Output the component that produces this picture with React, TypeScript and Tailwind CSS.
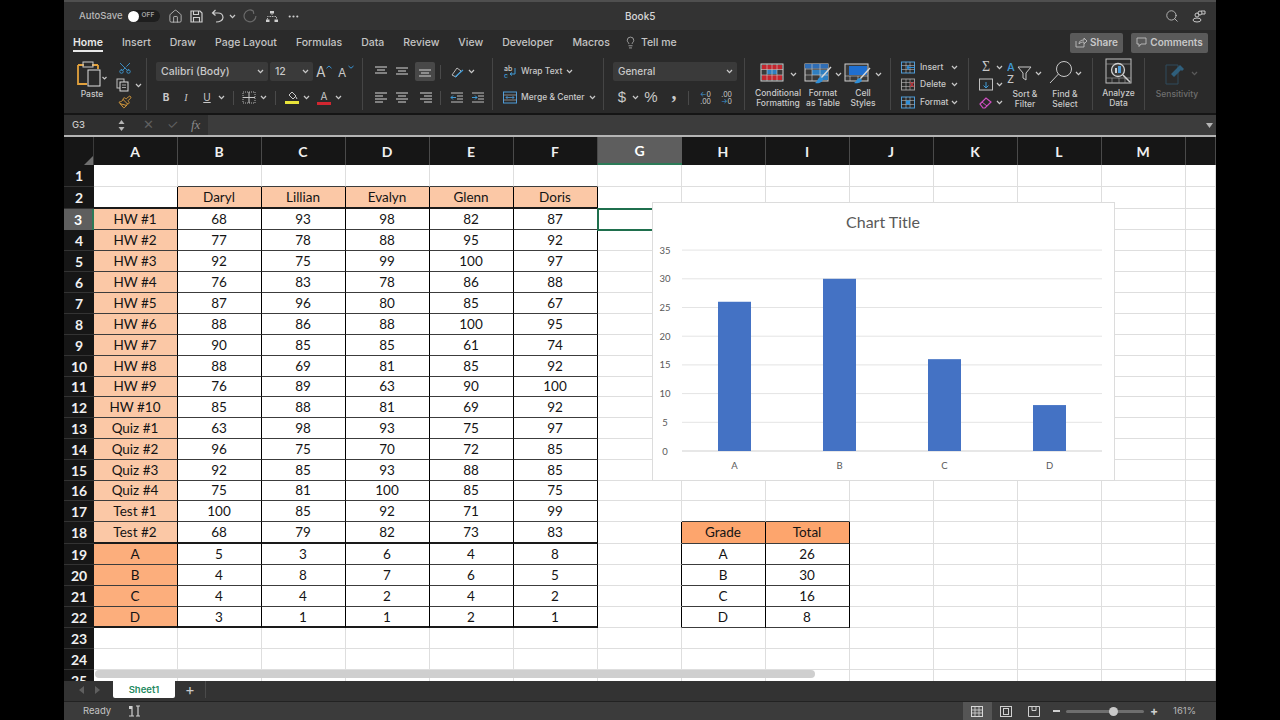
import React from "react";
import { Search, Lightbulb, Scissors, Paintbrush, House, Ellipsis } from "lucide-react";

const Caret = ({ c = "#c8c8c8" }: { c?: string }) => (
  <svg width="7" height="5" viewBox="0 0 7 5" className="shrink-0"><path d="M1 1l2.5 2.600L6 1" fill="none" stroke={c} strokeWidth="1.300" /></svg>
);
const Div = () => <div className="w-px h-[14px] bg-[#4a4a4a] shrink-0" />;

const Lines = ({ rows, color = "#c9c9c9", w = 14 }: { rows: number[][]; color?: string; w?: number }) => (
  <svg width={w} height="13" viewBox={`0 0 ${w} 13`}>
    {rows.map((r, i) => <line key={i} x1={r[0]} x2={r[1]} y1={r[2]} y2={r[2]} stroke={color} strokeWidth="1.100" />)}
  </svg>
);

const TableIcon = ({ kind }: { kind: "cond" | "fmt" | "cell" }) => (
  <svg width="30" height="22" viewBox="0 0 30 22">
    {kind === "cond" && <g>
      <rect x="1" y="1" width="22" height="17" fill="#3a3a3a" stroke="#cfcfcf" />
      <rect x="2" y="2" width="20" height="4.500" fill="#c4262e" />
      <rect x="7" y="7" width="10" height="4" fill="#2f7fc1" />
      <rect x="2" y="12" width="20" height="5" fill="#c4262e" />
      <path d="M7 1v17M12 1v17M17 1v17M1 6.500h22M1 12h22" stroke="#cfcfcf" strokeWidth=".6" fill="none" />
    </g>}
    {kind === "fmt" && <g>
      <rect x="1" y="1" width="23" height="17" fill="#3a3a3a" stroke="#cfcfcf" />
      <rect x="1" y="1" width="23" height="4.500" fill="#2f6db5" />
      <rect x="8" y="7" width="8" height="5" fill="#2f7fc1" />
      <rect x="16" y="7" width="8" height="10" fill="#2f7fc1" />
      <path d="M8 1v17M16 1v17M1 6h23M1 12h23" stroke="#cfcfcf" strokeWidth=".6" fill="none" />
      <path d="M27 4L17 15" stroke="#d8d8d8" strokeWidth="1.400" />
      <path d="M17 14c-3 0-3 4-6 6 4 1 8-1 8-4z" fill="#2f8fd8" />
    </g>}
    {kind === "cell" && <g>
      <rect x="1" y="1" width="23" height="17" fill="#3a3a3a" stroke="#cfcfcf" />
      <rect x="5" y="3" width="18" height="9" fill="#1f6fd0" />
      <path d="M1 13h23M6 13v5M14 13v5" stroke="#cfcfcf" strokeWidth=".6" fill="none" />
      <path d="M26 5L16 16" stroke="#d8d8d8" strokeWidth="1.400" />
      <path d="M16 15c-3 0-3 3-6 5 4 1 8-1 8-3z" fill="#2f8fd8" />
    </g>}
  </svg>
);

const SmallTable = ({ kind }: { kind: "ins" | "del" | "fmt" }) => (
  <svg width="14" height="13" viewBox="0 0 14 13">
    <rect x=".5" y="1" width="13" height="11" fill="none" stroke={kind === "del" ? "#9a9a9a" : "#4d9bd8"} />
    <path d="M.5 4.500h13M.5 8.500h13M5 1v11M9 1v11" stroke="#b9b9b9" strokeWidth=".6" />
    {kind === "ins" && <path d="M6 6.500h7M6 6.500l2-2M6 6.500l2 2" stroke="#2f8fd8" strokeWidth="1.200" fill="none" />}
    {kind === "del" && <path d="M9 4l4 5M13 4l-4 5" stroke="#c8323c" strokeWidth="1.200" />}
    {kind === "fmt" && <rect x="5" y="4.500" width="4" height="4" fill="#2f8fd8" />}
  </svg>
);

const FontA = ({ up }: { up?: boolean }) => (
  <div className="relative w-[16px] h-[16px]">
    <span className={up ? "absolute left-0 top-0 text-[14px] leading-[16px] text-[#c8c8c8]" : "absolute left-0 top-[1px] text-[12px] leading-[15px] text-[#c8c8c8]"}>A</span>
    <svg width="6" height="4" viewBox="0 0 6 4" className="absolute right-0 top-[1px]">
      <path d={up ? "M.5 3.200L3 1l2.500 2.200" : "M.5 1L3 3.200 5.500 1"} fill="none" stroke="#3a96d8" strokeWidth="1" />
    </svg>
  </div>
);

const titleIcons = (
  <div className="flex items-center h-full">
    <House size={15} color="#c9c9c9" strokeWidth={1.3} className="ml-[8px]" />
    <svg width="13" height="13" viewBox="0 0 13 13" className="ml-[7px]"><path d="M1 1h9l2 2v9H1z" fill="none" stroke="#cfcfcf" strokeWidth="1.200" /><path d="M3.500 1v3.500h5V1M3.500 12V7.500h6V12" fill="none" stroke="#cfcfcf" strokeWidth="1.100" /></svg>
    <svg width="14" height="14" viewBox="0 0 14 14" className="ml-[8px]"><path d="M4.500 1L1.500 4l3 2.500M1.500 4h5.500c3 0 5 2 5 4.500S9 13 5 13" fill="none" stroke="#cfcfcf" strokeWidth="1.200" /></svg>
    <div className="ml-[4px]"><Caret /></div>
    <svg width="14" height="14" viewBox="0 0 13 13" className="ml-[7px]"><path d="M9.500 1.800A5.500 5.500 0 1 0 12 6.500M9.500 1.800l.5 2.700M9.500 1.800L7 1" fill="none" stroke="#6a6a6a" strokeWidth="1.100" /></svg>
    <svg width="14" height="13" viewBox="0 0 14 13" className="ml-[8px]"><path d="M5 1h4v2.500H5zM1 9.500h3.500V12H1zM9.500 9.500H13V12H9.500z" fill="#cfcfcf" /><path d="M7 3.500v3M2.500 9.500V6.500h9v3" fill="none" stroke="#cfcfcf" strokeWidth=".8" strokeDasharray="1.500 1" /></svg>
    <Ellipsis size={13} color="#d0d0d0" className="ml-[8px]" />
  </div>
);

const tabs = ["Insert", "Draw", "Page Layout", "Formulas", "Data", "Review", "View", "Developer", "Macros"];

const Ribbon = () => (
  <div className="h-[58px] bg-[#2a2a2a] flex font-[Inter,sans-serif] text-[#c9c9c9]">
    {/* Clipboard */}
    <div className="w-[83px] my-[3px] border-r border-[#454545] flex shrink-0">
      <div className="w-[40px] ml-[8px] flex flex-col items-center">
        <svg width="32" height="27" viewBox="0 0 32 27" className="mt-[2px]">
          <path d="M2 5h6M16 5h6M22 5v4M2 5v19h9" fill="none" stroke="#e2a13c" strokeWidth="1.800" />
          <rect x="7" y="2" width="10" height="5" fill="none" stroke="#c9c9c9" />
          <rect x="12" y="10" width="12" height="16" fill="#2a2a2a" stroke="#e0e0e0" />
          <path d="M26.500 17l2 2 2-2" fill="none" stroke="#c8c8c8" strokeWidth="1.200" />
        </svg>
        <span className="text-[8.5px] font-medium leading-[10px] mt-[2px]">Paste</span>
      </div>
      <div className="ml-[4px] flex flex-col items-start gap-[3px] pt-[3px]">
        <Scissors size={14} color="#3f9ad6" strokeWidth={1.5} className="-rotate-90 ml-[2px]" />
        <div className="flex items-center gap-[5px]">
          <svg width="14" height="14" viewBox="0 0 14 14"><rect x="1" y="1" width="7" height="9" fill="none" stroke="#c0c0c0" /><rect x="4" y="4" width="8" height="9" fill="#2a2a2a" stroke="#d8d8d8" /><path d="M6 7h4M6 9.500h4" stroke="#c0c0c0" strokeWidth=".8" /></svg>
          <Caret />
        </div>
        <Paintbrush size={14} color="#e2a13c" strokeWidth={1.6} className="ml-[2px]" />
      </div>
    </div>
    {/* Font */}
    <div className="w-[216px] my-[3px] border-r border-[#454545] pl-[9px] pt-[4px] shrink-0">
      <div className="flex items-center h-[19px]">
        <div className="w-[112px] h-[19px] bg-[#3a3a3a] rounded-[2px] flex items-center justify-between pl-[5px] pr-[4px] text-[10.500px] font-medium"><span>Calibri (Body)</span><Caret /></div>
        <div className="w-[43px] h-[19px] ml-[2px] bg-[#3a3a3a] rounded-[2px] flex items-center justify-between pl-[5px] pr-[4px] text-[10.500px] font-medium"><span>12</span><Caret /></div>
        <div className="ml-[3px]"><FontA up /></div>
        <div className="ml-[6px]"><FontA /></div>
      </div>
      <div className="flex items-center h-[19px] mt-[7px] text-[10px]">
        <span className="w-[20px] text-center font-bold">B</span>
        <span className="w-[20px] text-center italic font-[Liberation_Serif,serif]">I</span>
        <span className="w-[22px] text-center underline">U</span>
        <Caret />
        <div className="ml-[8px]"><Div /></div>
        <svg width="14" height="13" viewBox="0 0 14 13" className="ml-[8px]"><rect x="1" y="1" width="12" height="11" fill="none" stroke="#b0b0b0" strokeDasharray="1 1" /><path d="M7 1v11M1 6.500h12" stroke="#c8c8c8" /></svg>
        <div className="ml-[4px]"><Caret /></div>
        <div className="ml-[8px]"><Div /></div>
        <div className="ml-[9px] w-[14px] flex flex-col items-center">
          <svg width="11" height="9" viewBox="0 0 11 9"><path d="M5 1l4 4-3 3-4-4zM9 6l1 2" fill="none" stroke="#c8c8c8" /></svg>
          <div className="w-[14px] h-[3px] bg-[#e8e33a] mt-[1px]" />
        </div>
        <div className="ml-[4px]"><Caret /></div>
        <div className="ml-[7px] w-[14px] flex flex-col items-center">
          <span className="text-[10px] leading-[10px]">A</span>
          <div className="w-[14px] h-[3px] bg-[#d22630] mt-[1px]" />
        </div>
        <div className="ml-[4px]"><Caret /></div>
      </div>
    </div>
    {/* Alignment */}
    <div className="w-[130px] my-[3px] border-r border-[#454545] pl-[10px] pt-[4px] shrink-0">
      <div className="flex items-center h-[19px]">
        <div className="w-[21px] flex justify-start pl-[1px]"><Lines rows={[[1, 13, 2], [3, 11, 5], [1, 13, 8]]} /></div>
        <div className="w-[21px] flex justify-start pl-[1px]"><Lines rows={[[1, 13, 3], [3, 11, 6], [1, 13, 9]]} /></div>
        <div className="w-[20px] h-[19px] bg-[#484848] rounded-[2px] flex items-center justify-center"><Lines rows={[[1, 13, 5], [3, 11, 8], [1, 13, 11]]} /></div>
        <div className="ml-[5px]"><Div /></div>
        <svg width="14" height="14" viewBox="0 0 14 14" className="ml-[9px]"><path d="M2 10l5-7 4 3-5 6z" fill="none" stroke="#b8b8b8" /><path d="M5 12l8-7" stroke="#3f9ad6" strokeWidth="1.200" /></svg>
        <div className="ml-[4px]"><Caret /></div>
      </div>
      <div className="flex items-center h-[19px] mt-[7px]">
        <div className="w-[21px] pl-[1px]"><Lines rows={[[1, 13, 2], [1, 9, 5], [1, 13, 8], [1, 9, 11]]} /></div>
        <div className="w-[21px] pl-[1px]"><Lines rows={[[1, 13, 2], [3, 11, 5], [1, 13, 8], [3, 11, 11]]} /></div>
        <div className="w-[20px] pl-[4px]"><Lines rows={[[1, 13, 2], [5, 13, 5], [1, 13, 8], [5, 13, 11]]} /></div>
        <div className="ml-[5px]"><Div /></div>
        <svg width="14" height="13" viewBox="0 0 14 13" className="ml-[9px]"><path d="M1 2h12M7 5h6M7 8h6M1 11h12" stroke="#c0c0c0" /><path d="M1 6.500h5M1 6.500l2-2M1 6.500l2 2" stroke="#3f9ad6" fill="none" /></svg>
        <svg width="14" height="13" viewBox="0 0 14 13" className="ml-[7px]"><path d="M1 2h12M7 5h6M7 8h6M1 11h12" stroke="#c0c0c0" /><path d="M1 6.500h5M6 6.500l-2-2M6 6.500l-2 2" stroke="#3f9ad6" fill="none" /></svg>
      </div>
    </div>
    {/* Wrap */}
    <div className="w-[111px] my-[3px] border-r border-[#454545] pl-[10px] pt-[4px] text-[8.500px] font-medium shrink-0">
      <div className="flex items-center h-[19px]">
        <svg width="14" height="14" viewBox="0 0 14 14"><text x="1" y="6" fontSize="7" fill="#c8c8c8">ab</text><text x="1" y="13" fontSize="7" fill="#3f9ad6">c</text><path d="M12 3v6H7M7 9l2-1.500M7 9l2 1.500" fill="none" stroke="#3f9ad6" /></svg>
        <span className="ml-[4px]">Wrap Text</span>
        <div className="ml-[4px]"><Caret /></div>
      </div>
      <div className="flex items-center h-[19px] mt-[7px]">
        <svg width="14" height="13" viewBox="0 0 14 13"><rect x=".5" y="1" width="13" height="11" fill="none" stroke="#4d9bd8" /><path d="M.5 4h13M.5 9h13" stroke="#b0b0b0" strokeWidth=".7" /><path d="M3 6.500h8M3 6.500l1.500-1.500M3 6.500l1.500 1.500M11 6.500L9.500 5M11 6.500L9.500 8" stroke="#4d9bd8" fill="none" strokeWidth=".8" /></svg>
        <span className="ml-[4px]">Merge &amp; Center</span>
        <div className="ml-[4px]"><Caret /></div>
      </div>
    </div>
    {/* Number */}
    <div className="w-[141px] my-[3px] border-r border-[#454545] pl-[9px] pt-[4px] shrink-0">
      <div className="w-[124px] h-[19px] bg-[#3a3a3a] rounded-[2px] flex items-center justify-between pl-[5px] pr-[4px] text-[10px] font-medium"><span>General</span><Caret /></div>
      <div className="flex items-center h-[19px] mt-[7px]">
        <span className="w-[18px] text-center text-[15px] font-[Liberation_Sans,sans-serif]">$</span>
        <div className="ml-[1px]"><Caret /></div>
        <span className="ml-[5px] w-[14px] text-center text-[15px] font-[Liberation_Sans,sans-serif]">%</span>
        <span className="ml-[11px] w-[10px] h-[19px] text-center text-[20px] leading-[9px] font-bold font-[Liberation_Serif,serif]">,</span>
        <div className="ml-[9px]"><Div /></div>
        <div className="ml-[8px] w-[14px] text-[7px] leading-[7px] text-right"><div><span className="text-[#3f9ad6]">←</span>0</div><div>.00</div></div>
        <div className="ml-[7px] w-[14px] text-[7px] leading-[7px] text-right"><div>.00</div><div><span className="text-[#3f9ad6]">→</span>0</div></div>
      </div>
    </div>
    {/* Styles */}
    <div className="w-[146px] my-[3px] border-r border-[#454545] pl-[9px] pt-[4px] text-[8.500px] font-medium leading-[9.500px] text-center shrink-0 flex">
      <div className="w-[48px] flex flex-col items-center">
        <div className="h-[24px] flex items-center gap-[3px]"><TableIcon kind="cond" /><div className="-ml-[3px]"><Caret /></div></div>
        <span className="mt-[3px]">Conditional</span><span>Formatting</span>
      </div>
      <div className="w-[38px] ml-[2px] flex flex-col items-center">
        <div className="h-[24px] flex items-center gap-[1px]"><TableIcon kind="fmt" /><Caret /></div>
        <span className="mt-[3px]">Format</span><span>as Table</span>
      </div>
      <div className="w-[40px] ml-[1px] flex flex-col items-center">
        <div className="h-[24px] flex items-center gap-[1px]"><TableIcon kind="cell" /><Caret /></div>
        <span className="mt-[3px]">Cell</span><span>Styles</span>
      </div>
    </div>
    {/* Cells */}
    <div className="w-[78px] my-[3px] border-r border-[#454545] pl-[10px] pt-[2px] text-[8.500px] font-medium flex flex-col gap-[3.500px] shrink-0">
      {([["ins", "Insert"], ["del", "Delete"], ["fmt", "Format"]] as const).map(([k, t]) => (
        <div key={t} className="flex items-center h-[14px]">
          <SmallTable kind={k} />
          <span className="ml-[5px] w-[31px]">{t}</span>
          <Caret />
        </div>
      ))}
    </div>
    {/* Editing */}
    <div className="w-[124px] my-[3px] border-r border-[#454545] pl-[10px] pt-[2px] text-[8.500px] font-medium leading-[9.500px] text-center flex shrink-0">
      <div className="w-[27px] flex flex-col gap-[3.500px]">
        <div className="flex items-center h-[14px] gap-[3px]"><span className="w-[14px] text-[14px] leading-[14px] font-[Liberation_Serif,serif]">Σ</span><Caret /></div>
        <div className="flex items-center h-[14px] gap-[3px]"><svg width="14" height="13" viewBox="0 0 14 13"><rect x=".5" y="1" width="13" height="11" fill="none" stroke="#c0c0c0" /><path d="M7 4v6M4.500 7.500L7 10l2.500-2.500" stroke="#3f9ad6" fill="none" /></svg><Caret /></div>
        <div className="flex items-center h-[14px] gap-[3px]"><svg width="14" height="13" viewBox="0 0 14 13"><path d="M1 8l6-6 5 4-6 6H4z" fill="none" stroke="#d14fc4" strokeWidth="1.200" /><path d="M3 6l5 4" stroke="#d14fc4" /></svg><Caret /></div>
      </div>
      <div className="w-[40px] flex flex-col items-center">
        <div className="h-[26px] flex items-center gap-[2px] -ml-[3px]">
          <svg width="26" height="24" viewBox="0 0 26 24"><text x="0" y="10" fontSize="11" fill="#3f9ad6">A</text><text x="0" y="22" fontSize="11" fill="#c8c8c8">Z</text><path d="M11 6h13l-5 6v7l-3-2v-5z" fill="none" stroke="#c8c8c8" /></svg>
          <Caret />
        </div>
        <span className="mt-[4px] -ml-[2px]">Sort &amp;</span><span className="-ml-[2px]">Filter</span>
      </div>
      <div className="w-[40px] flex flex-col items-center">
        <div className="h-[26px] flex items-center gap-[2px] -ml-[2px]">
          <svg width="24" height="26" viewBox="0 0 24 26"><circle cx="15" cy="9" r="7.500" fill="none" stroke="#c8c8c8" /><path d="M9.500 14L1 23" stroke="#c8c8c8" /></svg>
          <Caret />
        </div>
        <span className="mt-[4px] -ml-[2px]">Find &amp;</span><span className="-ml-[2px]">Select</span>
      </div>
    </div>
    {/* Analyze */}
    <div className="w-[52px] my-[3px] border-r border-[#454545] text-[8.500px] font-medium leading-[9.500px] flex flex-col items-center shrink-0">
      <svg width="28" height="27" viewBox="0 0 28 27">
        <rect x="1" y="1" width="25" height="24" fill="none" stroke="#c0c0c0" />
        <path d="M1 6h25M1 20h25M7 20v5M14 20v5M20 20v5" stroke="#9a9a9a" strokeWidth=".7" />
        <circle cx="13" cy="12" r="6.500" fill="#3a3a3a" stroke="#d0d0d0" strokeWidth="1.300" />
        <rect x="10" y="10" width="2" height="5" fill="#d0d0d0" /><rect x="13" y="8" width="3" height="7" fill="#4d9bd8" />
        <path d="M18 17l7 7" stroke="#d0d0d0" strokeWidth="1.500" />
      </svg>
      <span className="mt-[4px]">Analyze</span><span>Data</span>
    </div>
    {/* Sensitivity */}
    <div className="flex-1 my-[3px] text-[8.500px] font-medium leading-[10px] text-[#6f6f6f] flex flex-col items-center">
      <div className="h-[27px] flex items-center gap-[4px] mt-[2px]">
        <svg width="24" height="24" viewBox="0 0 24 24"><path d="M3 3h12v19H3z" fill="none" stroke="#2f4a5c" /><path d="M8 12l7-7 3 3-7 7z M17 3l4 4-2 2-4-4z" fill="#2f5f7c" /></svg>
        <Caret c="#5a5a5a" />
      </div>
      <span className="mt-[2px] pr-[7px]">Sensitivity</span>
    </div>
  </div>
);

const colLetters = ["A", "B", "C", "D", "E", "F", "G", "H", "I", "J", "K", "L", "M", ""];

const data: string[][] = [
  ["", "Daryl", "Lillian", "Evalyn", "Glenn", "Doris"],
  ["HW #1", "68", "93", "98", "82", "87"],
  ["HW #2", "77", "78", "88", "95", "92"],
  ["HW #3", "92", "75", "99", "100", "97"],
  ["HW #4", "76", "83", "78", "86", "88"],
  ["HW #5", "87", "96", "80", "85", "67"],
  ["HW #6", "88", "86", "88", "100", "95"],
  ["HW #7", "90", "85", "85", "61", "74"],
  ["HW #8", "88", "69", "81", "85", "92"],
  ["HW #9", "76", "89", "63", "90", "100"],
  ["HW #10", "85", "88", "81", "69", "92"],
  ["Quiz #1", "63", "98", "93", "75", "97"],
  ["Quiz #2", "96", "75", "70", "72", "85"],
  ["Quiz #3", "92", "85", "93", "88", "85"],
  ["Quiz #4", "75", "81", "100", "85", "75"],
  ["Test #1", "100", "85", "92", "71", "99"],
  ["Test #2", "68", "79", "82", "73", "83"],
  ["A", "5", "3", "6", "4", "8"],
  ["B", "4", "8", "7", "6", "5"],
  ["C", "4", "4", "2", "4", "2"],
  ["D", "3", "1", "1", "2", "1"],
];
const grade: string[][] = [["Grade", "Total"], ["A", "26"], ["B", "30"], ["C", "16"], ["D", "8"]];

function cellText(r: number, c: number) {
  if (r >= 2 && r <= 22 && c <= 5) return data[r - 2][c];
  if (r >= 18 && r <= 22 && (c === 7 || c === 8)) return grade[r - 18][c - 7];
  return "";
}
function cellClass(r: number, c: number) {
  const inMain = r >= 2 && r <= 22 && c <= 5;
  const inGrade = r >= 18 && r <= 22 && (c === 7 || c === 8);
  let cls = "flex items-center justify-center border-r border-b overflow-hidden pr-[1px] ";
  if (r >= 19) cls += "pt-[1px] ";
  const darkRight = inMain || (r >= 18 && r <= 22 && (c === 6 || c === 7 || c === 8));
  cls += darkRight ? "border-r-black " : "border-r-[#dedede] ";
  const darkBottom = inMain || inGrade || (r === 1 && c >= 1 && c <= 5) || (r === 17 && (c === 7 || c === 8));
  if (darkBottom) {
    if (inMain && (r === 2 || r === 18 || r === 22)) cls += "border-b-2 border-b-[#1a1a1a] ";
    else cls += "border-b-[#3c3c3c] ";
  } else cls += "border-b-[#dedede] ";
  if (r === 2 && c >= 1 && c <= 5) cls += "bg-[#fbc8a6] ";
  else if (c === 0 && r >= 3 && r <= 18) cls += "bg-[#fbc8a6] ";
  else if (c === 0 && r >= 19 && r <= 22) cls += "bg-[#fcae7c] ";
  else if (r === 18 && (c === 7 || c === 8)) cls += "bg-[#fda56d] ";
  else cls += "bg-white ";
  return cls;
}

const rowNums = Array.from({ length: 25 }, (_, i) => i + 1);
const yTicks = [35, 30, 25, 20, 15, 10, 5, 0];
const bars = [{ l: "A", x: 66, v: 26 }, { l: "B", x: 171, v: 30 }, { l: "C", x: 276, v: 16 }, { l: "D", x: 381, v: 8 }];

const Sheet = () => (
  <div className="relative h-[544px] bg-white overflow-hidden font-[Lato,sans-serif] text-[13.500px] text-[#141414] shrink-0">
    <div className="grid grid-cols-[30px_repeat(13,84px)_30px] grid-rows-[28px_22px_22px_21px_21px_21px_21px_21px_21px_21px_21px_20px_21px_21px_21px_21px_20px_21px_22px_21px_21px_21px_21px_21px_21px_21px]">
      <div className="bg-[#161616] border-r border-[#3a3a3a] relative">
        <svg width="9" height="9" viewBox="0 0 9 9" className="absolute right-0 bottom-0"><path d="M9 0v9H0z" fill="#6f6f6f" /></svg>
      </div>
      {colLetters.map((l, i) => (
        <div key={i} className={i === 6 ? "bg-[#5e5e5e] border-b-2 border-[#2c7a57] flex items-center justify-center font-bold text-white text-[14px] pr-[1px]" : "bg-[#161616] border-r border-[#4a4a4a] flex items-center justify-center font-bold text-[#f0f0f0] text-[14px] pr-[1px]"}>{l}</div>
      ))}
      {rowNums.map((r) => (
        <React.Fragment key={r}>
          <div className={r === 3 ? "bg-[#5e5e5e] border-r-2 border-[#2c7a57] flex items-center justify-center font-bold text-white text-[14px]" : "bg-[#161616] border-b border-[#333] flex items-center justify-center font-bold text-[#f0f0f0] text-[14px]"}>{r}</div>
          {colLetters.map((_, c) => (
            <div key={c} className={cellClass(r, c)}>{cellText(r, c)}</div>
          ))}
        </React.Fragment>
      ))}
    </div>
    {/* selected cell */}
    <div className="absolute left-[533px] top-[71px] w-[85px] h-[23px] border-2 border-[#1f6f4d]" />
    {/* chart */}
    <div className="absolute left-[588px] top-[65px] w-[463px] h-[279px] bg-white border border-[#dcdcdc]">
      <svg width="461" height="277" viewBox="1 0 461 277" className="font-[Lato,sans-serif]">
        <text x="231" y="25" textAnchor="middle" fontSize="16" fill="#595959">Chart Title</text>
        {yTicks.map((t) => {
          const y = 248 - t * 5.74;
          return (
            <g key={t}>
              <text x="13" y={y + 3.5} textAnchor="middle" fontSize="9.500" fill="#595959">{t}</text>
              <line x1="30" x2="450" y1={y} y2={y} stroke={t === 0 ? "#cfcfcf" : "#e4e4e4"} />
            </g>
          );
        })}
        {bars.map((b) => (
          <g key={b.l}>
            <rect x={b.x} y={248 - b.v * 5.74} width="33" height={b.v * 5.74} fill="#4472c4" />
            <text x={b.x + 16.5} y="266" textAnchor="middle" fontSize="9.500" fill="#595959">{b.l}</text>
          </g>
        ))}
      </svg>
    </div>
    {/* scrollbar */}
    <div className="absolute left-[31px] top-[533px] w-[720px] h-[8px] rounded-full bg-[#cfcfcf]" />
  </div>
);

export default function App() {
  return (
    <div className="w-[1280px] h-[720px] bg-black flex justify-center overflow-hidden font-[Inter,sans-serif]">
      <div className="w-[1152px] h-[720px] flex flex-col">
        {/* title bar */}
        <div className="h-[30px] bg-[#333333] border-t-2 border-[#4f4f4f] flex items-center justify-between relative shrink-0">
          <div className="flex items-center h-full pl-[15px]">
            <span className="text-[9.500px] font-medium text-[#b8b8b8]">AutoSave</span>
            <div className="ml-[5px] w-[32px] h-[12px] rounded-full bg-[#1e1e1e] flex items-center">
              <div className="w-[11px] h-[11px] rounded-full bg-white" />
              <span className="ml-[3px] text-[6.500px] font-semibold text-[#a5a5a5]">OFF</span>
            </div>
            {titleIcons}
          </div>
          <span className="absolute left-[561px] text-[10px] font-medium text-[#d8d8d8]">Book5</span>
          <div className="flex items-center gap-[13px] pr-[10px]">
            <Search size={14} color="#c9c9c9" strokeWidth={1.4} />
            <svg width="14" height="14" viewBox="0 0 14 14"><circle cx="8" cy="4" r="2" fill="none" stroke="#c9c9c9" /><circle cx="5" cy="6" r="2" fill="none" stroke="#c9c9c9" /><ellipse cx="5" cy="11" rx="4" ry="2" fill="none" stroke="#c9c9c9" /><path d="M9 2h4v3h-3" fill="none" stroke="#c9c9c9" /></svg>
          </div>
        </div>
        {/* tabs */}
        <div className="h-[25px] bg-[#2a2a2a] flex items-center justify-between shrink-0 pl-[9px] pr-[8px]">
          <div className="flex items-center gap-[19px] text-[10.500px] font-medium text-[#c4c4c4] h-full">
            <div className="relative h-full flex items-center font-semibold text-[#e8e8e8]">
              Home
              <div className="absolute left-0 right-0 bottom-[3px] h-[2px] bg-[#e8e8e8]" />
            </div>
            {tabs.map((t) => <span key={t}>{t}</span>)}
            <div className="flex items-center gap-[4px] -ml-[5px]">
              <Lightbulb size={13} color="#c4c4c4" strokeWidth={1.3} />
              <span>Tell me</span>
            </div>
          </div>
          <div className="flex items-center gap-[8px] text-[10px] font-semibold text-[#c8c8c8]">
            <div className="w-[53px] h-[20px] bg-[#5a5a5a] rounded-[2px] flex items-center justify-center gap-[3px]">
              <svg width="12" height="11" viewBox="0 0 12 11"><path d="M1 4v6h8V7M4 7c0-3 2-4 5-4V1l3 3-3 3V5c-2 0-4 .5-5 2z" fill="none" stroke="#bdbdbd" strokeWidth=".9" /></svg>
              Share
            </div>
            <div className="w-[77px] h-[20px] bg-[#5a5a5a] rounded-[2px] flex items-center justify-center gap-[3px]">
              <svg width="11" height="11" viewBox="0 0 11 11"><path d="M1 1h9v6H5L3 9.500V7H1z" fill="none" stroke="#bdbdbd" strokeWidth=".9" /></svg>
              Comments
            </div>
          </div>
        </div>
        <Ribbon />
        {/* formula bar */}
        <div className="h-[24px] bg-[#151515] border-b-2 border-[#b5b5b5] pt-[2px] shrink-0">
          <div className="h-[20px] flex bg-[#2f2f2f]">
            <div className="w-[66px] flex items-center justify-between pl-[8px] pr-[5px] text-[9.500px] font-medium text-[#c9c9c9]">
              <span>G3</span>
              <svg width="7" height="13" viewBox="0 0 7 13"><path d="M3.500 1L6.500 5h-6zM3.500 12L.5 8h6z" fill="#b5b5b5" /></svg>
            </div>
            <div className="w-[78px] flex items-center pl-[13px]">
              <span className="w-[24px] text-[13px] text-[#5f5f5f]">✕</span>
              <span className="w-[24px] text-[13px] text-[#5f5f5f]">✓</span>
              <span className="text-[13px] italic font-[Liberation_Serif,serif] text-[#8a8a8a]">fx</span>
            </div>
            <div className="flex-1 bg-[#3c3c3c] flex items-center justify-end pr-[3px]">
              <svg width="7" height="5" viewBox="0 0 7 5"><path d="M0 0h7L3.500 5z" fill="#b5b5b5" /></svg>
            </div>
          </div>
        </div>
        <Sheet />
        {/* sheet tabs */}
        <div className="h-[21px] bg-[#333333] flex items-start shrink-0 border-b border-[#222]">
          <div className="w-[49px] h-[17px] flex items-center justify-center gap-[11px] pl-[2px]">
            <svg width="5" height="8" viewBox="0 0 5 8"><path d="M5 0v8L0 4z" fill="#5f5f5f" /></svg>
            <svg width="5" height="8" viewBox="0 0 5 8"><path d="M0 0v8l5-4z" fill="#5f5f5f" /></svg>
          </div>
          <div className="w-[62px] h-[17px] pt-[1px] bg-white rounded-b-[2px] flex items-center justify-center text-[9.500px] font-semibold text-[#1f8a5f]">Sheet1</div>
          <div className="w-[31px] h-[17px] pt-[1px] flex items-center justify-center text-[15px] text-[#c9c9c9] border-r border-[#4a4a4a]">+</div>
        </div>
        {/* status bar */}
        <div className="flex-1 bg-[#3b3b3b] flex items-center justify-between text-[#c4c4c4] text-[9.500px]">
          <div className="flex items-center pl-[19px]">
            <span>Ready</span>
            <svg width="13" height="12" viewBox="0 0 13 12" className="ml-[17px]"><path d="M4 1v10M1 11h5M8 1h4M10 1v10M8 11h4" fill="none" stroke="#d0d0d0" strokeWidth="1.200" /><rect x="1" y="1" width="3" height="3" fill="#d0d0d0" /></svg>
          </div>
          <div className="flex items-center h-full pr-[20px]">
            <div className="w-[29px] h-full bg-[#555555] flex items-center justify-center">
              <svg width="12" height="11" viewBox="0 0 12 11"><rect x=".5" y=".5" width="11" height="10" fill="none" stroke="#d8d8d8" /><path d="M4 .5v10M8 .5v10M.5 4h11M.5 7h11" stroke="#d8d8d8" strokeWidth=".8" /></svg>
            </div>
            <svg width="12" height="11" viewBox="0 0 12 11" className="ml-[8px]"><rect x=".5" y=".5" width="11" height="10" fill="none" stroke="#d0d0d0" /><rect x="3.500" y="2.500" width="5" height="6" fill="none" stroke="#d0d0d0" /></svg>
            <svg width="12" height="11" viewBox="0 0 12 11" className="ml-[16px]"><path d="M.5 .5h11v10H.5zM4 .5v4h4v-4" fill="none" stroke="#d0d0d0" /></svg>
            <div className="ml-[13px] w-[7px] h-[2px] bg-[#cfcfcf]" />
            <div className="ml-[6px] w-[78px] h-[3px] rounded-full bg-[#6e6e6e] relative">
              <div className="absolute left-[43px] -top-[3px] w-[9px] h-[9px] rounded-full bg-[#c9c9c9]" />
            </div>
            <span className="ml-[6px] text-[12px] font-bold leading-none text-[#d0d0d0]">+</span>
            <span className="ml-[15px] text-[#b8b8b8]">161%</span>
          </div>
        </div>
      </div>
    </div>
  );
}
